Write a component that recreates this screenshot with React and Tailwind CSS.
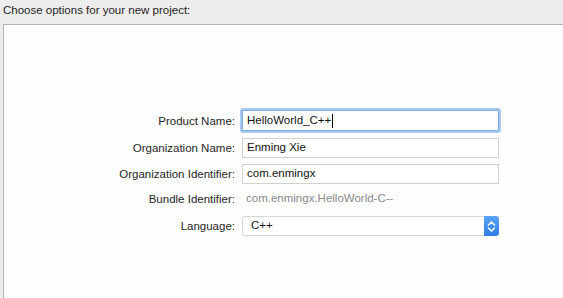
export default function App() {
  const font = { fontFamily: '"Liberation Sans", Arial, sans-serif' };
  return (
    <div className="w-[563px] h-[298px] bg-[#eeeded] flex flex-col overflow-hidden" style={font}>
      <div className="h-[24px] pl-[3px] pt-[3px] text-[11.5px] leading-[15px] text-[#1e1e1e]">
        Choose options for your new project:
      </div>
      <div className="flex-1 ml-[3px] border-l border-t border-[#b3b3b3] bg-[#fdfdfd] pt-[85px] text-[11.5px] text-[#262626]">
        <div className="grid grid-cols-[231px_257px] gap-x-[7px] items-center">
          {/* Product Name */}
          <div className="text-right leading-[20px]">Product Name:</div>
          <div className="h-[21px] border border-[#7ea8e2] shadow-[0_0_0_2px_#a9c9f1] rounded-[1px] bg-white flex items-center pl-[4px] text-[#111]">
            HelloWorld_C++<span className="inline-block w-px h-[14px] bg-black ml-[1px]"></span>
          </div>

          {/* Org name */}
          <div className="text-right leading-[20px] mt-[7px]">Organization Name:</div>
          <div className="h-[20px] mt-[7px] border border-[#cfcfcf] bg-white flex items-center pl-[4px] text-[#111]">
            Enming Xie
          </div>

          {/* Org id */}
          <div className="text-right leading-[20px] mt-[6px]">Organization Identifier:</div>
          <div className="h-[20px] mt-[6px] border border-[#cfcfcf] bg-white flex items-center pl-[4px] text-[#111]">
            com.enmingx
          </div>

          {/* Bundle */}
          <div className="text-right leading-[20px] mt-[5px]">Bundle Identifier:</div>
          <div className="h-[20px] mt-[5px] flex items-center pl-[4px] text-[#8a8a8a]">
            com.enmingx.HelloWorld-C--
          </div>

          {/* Language */}
          <div className="text-right leading-[20px] mt-[7px]">Language:</div>
          <div className="h-[20px] mt-[7px] flex">
            <div className="flex-1 border border-r-0 border-[#d6d6d6] rounded-l-[3px] bg-white flex items-center pl-[8px] text-[#111]">
              C++
            </div>
            <div className="w-[15px] rounded-r-[3px] bg-gradient-to-b from-[#5aa2f6] to-[#2f7ee8] flex items-center justify-center">
              <svg width="9" height="13" viewBox="0 0 9 13" fill="none">
                <path d="M1.5 5 L4.5 2 L7.5 5" stroke="white" strokeWidth="1.5" strokeLinecap="round" strokeLinejoin="round" />
                <path d="M1.5 8 L4.5 11 L7.5 8" stroke="white" strokeWidth="1.5" strokeLinecap="round" strokeLinejoin="round" />
              </svg>
            </div>
          </div>
        </div>
      </div>
    </div>
  );
}
